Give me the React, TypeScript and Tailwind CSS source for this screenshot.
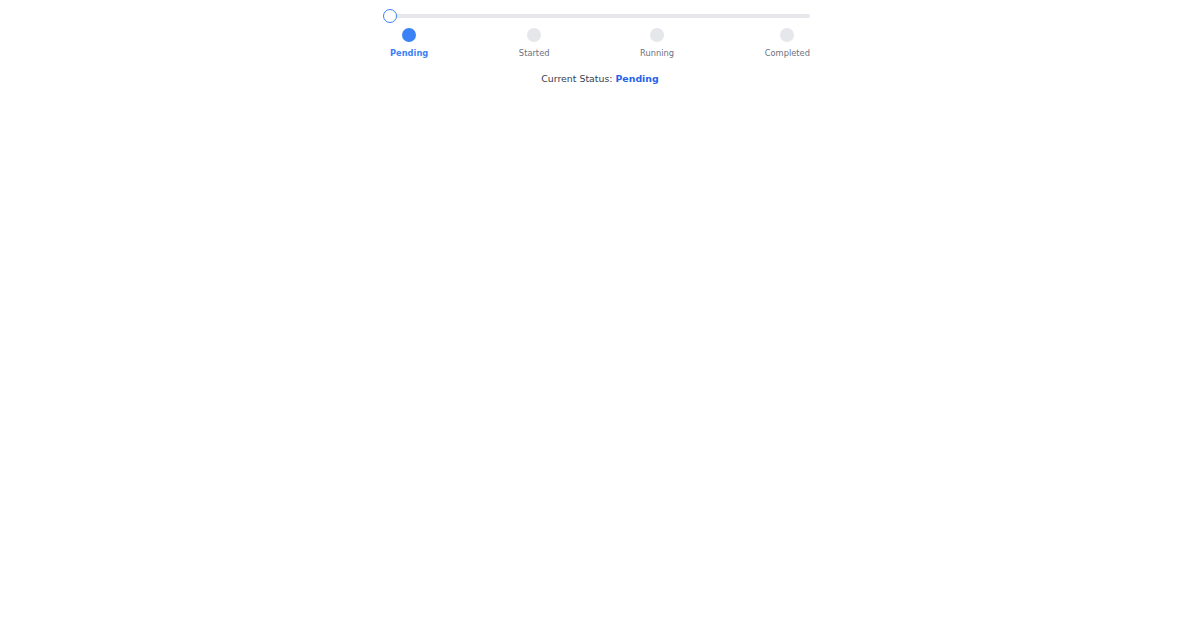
const steps = ["Pending", "Started", "Running", "Completed"];

export default function App() {
  const current = 0;

  return (
    <div className="w-full min-h-screen bg-white" style={{ fontFamily: '"DejaVu Sans", sans-serif' }}>
      <div className="w-[420px] mx-auto pt-[14px]">
        {/* slider track */}
        <div className="relative h-1 rounded-full bg-[#e5e7eb]">
          <div className="absolute left-[-7px] top-[-5px] w-[14px] h-[14px] rounded-full border-[1.5px] border-[#3b82f6] bg-white" />
        </div>

        <div className="flex justify-between mt-[10px]">
          {steps.map((s, i) => (
            <div key={s} className="flex flex-col items-center">
              <div className={`w-[14px] h-[14px] rounded-full ${i <= current ? "bg-[#3b82f6]" : "bg-[#e5e7eb]"}`} />
              <span
                className={`mt-[4px] text-[8.3px] leading-[14px] ${
                  i === current ? "text-[#3b82f6] font-bold" : "text-[#6b7280]"
                }`}
              >
                {s}
              </span>
            </div>
          ))}
        </div>

        <div className="mt-[12px] text-center text-[9.4px] leading-[14px] text-[#374151]">
          Current Status: <span className="font-bold text-[#2563eb]">{steps[current]}</span>
        </div>
      </div>
    </div>
  );
}
